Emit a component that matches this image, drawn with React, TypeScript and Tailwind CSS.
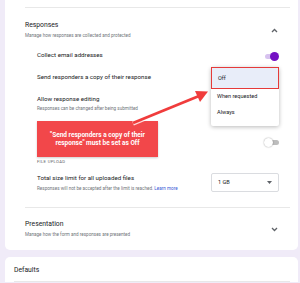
import React from "react";

const ChevronUp = () => (
  <svg width="7" height="5" viewBox="0 0 7 5" className="block">
    <polyline points="1,4 3.5,1.5 6,4" fill="none" stroke="#5f6368" strokeWidth="1.3" />
  </svg>
);
const ChevronDown = () => (
  <svg width="7" height="5" viewBox="0 0 7 5" className="block">
    <polyline points="1,1 3.5,3.5 6,1" fill="none" stroke="#5f6368" strokeWidth="1.3" />
  </svg>
);

const ToggleOn = () => (
  <div className="relative w-[14px] h-[9px] flex items-center">
    <div className="w-[13px] h-[5px] rounded-full bg-[#d7c2ef]" />
    <div className="absolute right-0 top-0 w-[9px] h-[9px] rounded-full bg-[#7412c4]" />
  </div>
);
const ToggleOff = () => (
  <div className="relative w-[15px] h-[9px] flex items-center">
    <div className="w-[13px] h-[5px] ml-[2px] rounded-full bg-[#bdbdbd]" />
    <div className="absolute left-0 top-0 w-[9px] h-[9px] rounded-full bg-white shadow-[0_0_1.5px_rgba(0,0,0,0.45)]" />
  </div>
);

export default function App() {
  return (
    <div
      className="relative w-[300px] h-[283px] overflow-hidden bg-[#f0ebf8] pl-[5px] pr-[2px]"
      style={{ fontFamily: "Roboto, 'Liberation Sans', sans-serif" }}
    >
      {/* Card 1 */}
      <div className="bg-white rounded-b-[5px] pl-[20px] pr-[8px] pb-[12px]">
        <div className="h-[8px] border-b border-[#e8e8e8]" />
        {/* Responses header */}
        <div className="flex items-center justify-between pt-[13px] pr-[12px]">
          <div>
            <div className="text-[6.8px] leading-[9px] text-[#202124]">Responses</div>
            <div className="mt-[2px] text-[4.6px] leading-[7px] text-[#70757a]">
              Manage how responses are collected and protected
            </div>
          </div>
          <ChevronUp />
        </div>
        {/* rows */}
        <div className="pl-[12px] pr-[11px] mt-[6px]">
          <div className="h-[22px] flex items-center justify-between">
            <div className="text-[6.2px] text-[#202124]">Collect email addresses</div>
            <ToggleOn />
          </div>
          <div className="h-[22px] flex items-center">
            <div className="text-[6.2px] text-[#202124]">Send responders a copy of their response</div>
          </div>
          <div className="pt-[6px]">
            <div className="text-[6.2px] leading-[9px] text-[#202124]">Allow response editing</div>
            <div className="mt-[1px] text-[4.6px] leading-[7px] text-[#70757a]">
              Responses can be changed after being submitted
            </div>
          </div>
          <div className="h-[38px] flex justify-end items-start pt-[26px]">
            <ToggleOff />
          </div>
          <div className="mt-[9px] text-[4.2px] leading-[6px] tracking-[0.3px] text-[#5f6368]">FILE UPLOAD</div>
          <div className="mt-[8px] flex items-center justify-between">
            <div>
              <div className="text-[6.2px] leading-[9px] text-[#202124]">Total size limit for all uploaded files</div>
              <div className="mt-[2px] text-[4.6px] leading-[7px] text-[#70757a]">
                Responses will not be accepted after the limit is reached.{" "}
                <span className="text-[#3c5bd6]">Learn more</span>
              </div>
            </div>
            <div className="w-[68px] h-[19px] border border-[#dadce0] rounded-[2px] flex items-center justify-between pl-[6px] pr-[6px]">
              <span className="text-[5.6px] text-[#202124]">1 GB</span>
              <svg width="5" height="3" viewBox="0 0 5 3" className="block">
                <polygon points="0,0 5,0 2.5,3" fill="#5f6368" />
              </svg>
            </div>
          </div>
        </div>
        <div className="mt-[15px] border-b border-[#e8e8e8]" />
        {/* Presentation */}
        <div className="flex items-center justify-between pt-[12px] pr-[12px]">
          <div>
            <div className="text-[6.8px] leading-[9px] text-[#202124]">Presentation</div>
            <div className="mt-[2px] text-[4.6px] leading-[7px] text-[#70757a]">
              Manage how the form and responses are presented
            </div>
          </div>
          <ChevronDown />
        </div>
      </div>

      {/* Card 2 */}
      <div className="mt-[7px] bg-white rounded-t-[5px] pl-[9px] pr-[8px]">
        <div className="h-[25px] pt-[8px] border-b border-[#e8e8e8]">
          <div className="text-[6.8px] leading-[10px] text-[#202124]">Defaults</div>
        </div>
      </div>

      {/* Dropdown menu overlay */}
      <div className="absolute left-[211px] top-[67px] w-[68px] h-[59px] bg-white rounded-[2px] shadow-[0_1px_4px_rgba(0,0,0,0.28)]">
        <div className="h-[22px] flex items-center pl-[6px] bg-[#e8edf9] border-[1.5px] border-[#e53a3a]">
          <span className="text-[5.6px] text-[#202124]">Off</span>
        </div>
        <div className="h-[14px] flex items-center pl-[6px]">
          <span className="text-[5.6px] text-[#202124]">When requested</span>
        </div>
        <div className="h-[19px] flex items-center pl-[6px]">
          <span className="text-[5.6px] text-[#202124]">Always</span>
        </div>
      </div>

      {/* Callout */}
      <div className="absolute left-[37px] top-[121px] w-[121px] h-[36px] bg-[#f2474a] flex items-center justify-center shadow-[0_1px_2px_rgba(0,0,0,0.2)]">
        <div className="text-center text-white font-bold text-[6.5px] leading-[8px]">
          "Send responders a copy of their
          <br />
          response" must be set as Off
        </div>
      </div>

      {/* Arrow */}
      <svg className="absolute left-0 top-0" width="300" height="283" viewBox="0 0 300 283">
        <line x1="133" y1="123.5" x2="199" y2="96" stroke="white" strokeWidth="4.5" strokeOpacity="0.8" />
        <line x1="133" y1="123" x2="199" y2="96" stroke="#f03c3c" strokeWidth="2.8" />
        <polygon points="208,91.5 195,91 200,102" fill="#f03c3c" />
      </svg>
    </div>
  );
}
